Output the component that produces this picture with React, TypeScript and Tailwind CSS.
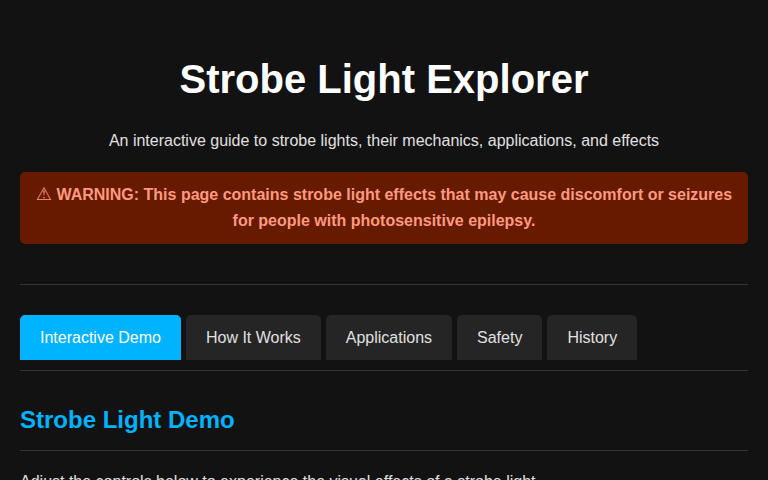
export default function App() {
  const tabs = ['Interactive Demo', 'How It Works', 'Applications', 'Safety', 'History'];
  return (
    <div className="h-[480px] overflow-hidden bg-[#121212] px-5 pt-5 text-[#e0e0e0] font-['Liberation_Sans',Arial,sans-serif] text-base leading-[1.6]">
      <header className="border-b border-[#333] pb-10 text-center">
        <h1 className="mb-[17px] mt-[27px] text-[40px] font-bold leading-[1.6] text-white">Strobe Light Explorer</h1>
        <p className="leading-[26px]">An interactive guide to strobe lights, their mechanics, applications, and effects</p>
        <div className="mt-[18px] rounded-[5px] bg-[#661a00] p-[10px] font-bold leading-[26px] text-[#ff9980]">
          <span className="font-normal font-['DejaVu_Sans',sans-serif] text-[18px] leading-[18px]">⚠</span> WARNING: This page contains strobe light effects that may cause discomfort or seizures for people with photosensitive epilepsy.
        </div>
      </header>
      <nav className="mt-[30px] flex gap-[5px] border-b border-[#333] pb-[10px]">
        {tabs.map((tab, i) => (
          <button
            key={tab}
            type="button"
            className={`rounded-t-[5px] px-5 py-[10px] text-base leading-[25px] ${i === 0 ? 'bg-[#00b3ff] text-white' : 'bg-[#252525] text-[#e0e0e0]'}`}
          >
            {tab}
          </button>
        ))}
      </nav>
      <section className="mt-[19px]">
        <h2 className="border-b border-[#333] py-[11px] text-2xl font-bold leading-[38px] text-[#00b3ff]">Strobe Light Demo</h2>
        <p className="mt-[18px]">Adjust the controls below to experience the visual effects of a strobe light.</p>
      </section>
    </div>
  );
}
